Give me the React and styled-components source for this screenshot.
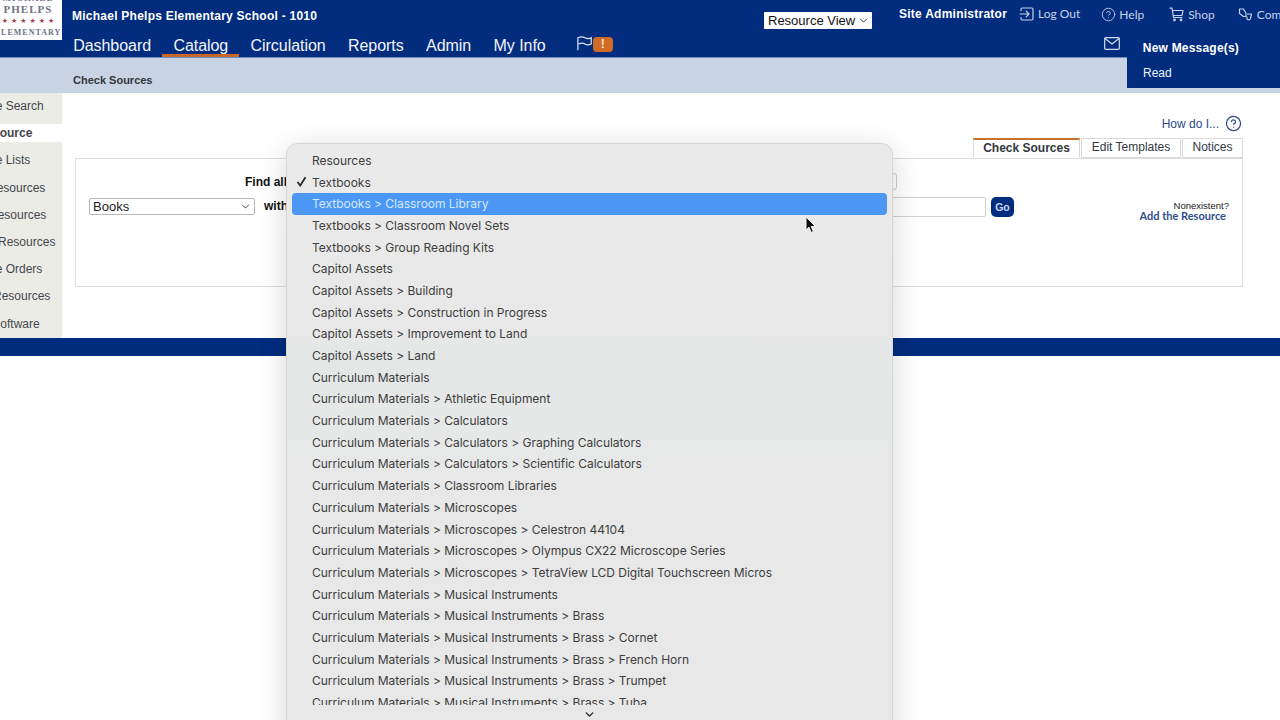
import React from "react";
import styled, { createGlobalStyle } from "styled-components";
import { ChevronDown, CircleHelp } from "lucide-react";

const Global = createGlobalStyle`
  html, body { margin: 0; width: 1280px; height: 720px; overflow: hidden; background: #fff; }
  body { font-family: "Liberation Sans", Arial, sans-serif; color: #222; }
  #root { width: 1280px; height: 720px; }
`;

const navy = "#022c7e";

const Page = styled.div`
  position: relative;
  width: 1280px;
  height: 720px;
  overflow: hidden;
`;
const Header = styled.header`
  display: flex;
  height: 57px;
  background: ${navy};
`;
const Logo = styled.div`
  width: 62px;
  height: 40px;
  background: #fff;
  overflow: hidden;
  display: flex;
  flex-direction: column;
  align-items: center;
  flex: none;
  font-family: "Liberation Serif", serif;
  font-weight: 700;
  color: #6d7482;
`;
const LogoInner = styled.div`
  width: 70px;
  margin: -7px 0 0 -6px;
  display: flex;
  flex-direction: column;
  align-items: center;
`;
const LogoLine = styled.div`
  font-size: ${(p) => p.$size}px;
  letter-spacing: ${(p) => p.$track}px;
  line-height: ${(p) => p.$lh}px;
  white-space: nowrap;
`;
const Stars = styled.div`
  color: #a43d4c;
  font-size: 7px;
  line-height: 10px;
  letter-spacing: 3px;
  margin-left: 3px;
  font-family: "DejaVu Sans", sans-serif;
`;
const HeaderMain = styled.div`
  flex: 1;
  display: flex;
  flex-direction: column;
  min-width: 0;
`;
const TopRow = styled.div`
  display: flex;
  align-items: flex-start;
  height: 32px;
  padding-left: 10px;
  white-space: nowrap;
`;
const School = styled.div`
  font-size: 12px;
  font-weight: 700;
  color: #fff;
  margin-top: 9px;
  line-height: 14px;
  width: 447px;
  letter-spacing: 0.25px;
  flex: none;
`;
const ViewSelect = styled.div`
  width: 108px;
  height: 17px;
  flex: none;
  margin: 12px 0 0 245px;
  background: #fff;
  color: #111;
  border-radius: 1px;
  display: flex;
  align-items: center;
  justify-content: space-between;
  box-sizing: border-box;
  padding: 0 2px 0 4px;
  font-size: 13px;
`;
const Admin = styled.div`
  margin: 7px 0 0 27px;
  font-size: 12px;
  line-height: 14px;
  font-weight: 700;
  letter-spacing: 0.25px;
  color: #fff;
  flex: none;
  width: 108px;
`;
const TopLink = styled.a`
  display: flex;
  align-items: center;
  gap: ${(p) => p.$space ?? 4}px;
  margin: 7px 0 0 ${(p) => p.$gap}px;
  font-family: Lato, sans-serif;
  font-size: 12px;
  line-height: 14px;
  color: #c6d2e8;
  flex: none;
`;
const NavRow = styled.div`
  position: relative;
  display: flex;
  height: 25px;
  align-items: stretch;
`;
const NavItem = styled.a`
  display: flex;
  align-items: center;
  padding: 5px 11.2px 0;
  box-sizing: border-box;
  font-size: 16px;
  letter-spacing: -0.05px;
  color: #f2f5fb;
  border-bottom: 3px solid ${(p) => (p.$active ? "#c8672a" : "transparent")};
`;
const FlagWrap = styled.div`
  position: relative;
  width: 40px;
  margin-left: 20px;
  padding-top: 3px;
`;
const FlagBadge = styled.span`
  position: absolute;
  left: 16px;
  top: 5px;
  width: 20px;
  height: 15px;
  border-radius: 4px;
  background: #d06a24;
  color: #f5e3d4;
  font-size: 12px;
  font-weight: 700;
  line-height: 15px;
  text-align: center;
`;
const MailSlot = styled.div`
  margin-left: 487px;
  padding-top: 4px;
`;
const NewMessages = styled.div`
  margin-left: 23px;
  padding-top: 9px;
  font-size: 12px;
  font-weight: 700;
  letter-spacing: 0.2px;
  color: #fff;
`;
const SubNav = styled.div`
  display: flex;
  height: 36px;
  background: #c8d3e3;
  border-top: 1px solid #6f8cc0;
  box-sizing: border-box;
  justify-content: space-between;
  align-items: flex-start;
`;
const Crumb = styled.div`
  margin: 16px 0 0 73px;
  font-size: 11px;
  line-height: 13px;
  font-weight: 700;
  color: #33373f;
`;
const ReadBox = styled.div`
  width: 153px;
  height: 31px;
  margin-top: -1px;
  box-sizing: border-box;
  padding: 9px 0 0 16px;
  background: ${navy};
  color: #f0f3fa;
  font-size: 12px;
  line-height: 14px;
`;
const Body = styled.div`
  display: flex;
  height: 245px;
`;
const Sidebar = styled.nav`
  width: 62px;
  flex: none;
  background: #ecece6;
  overflow: hidden;
  padding-top: 4px;
  box-sizing: border-box;
  display: flex;
  flex-direction: column;
  gap: 9.2px;
`;
const SideItem = styled.a`
  display: block;
  height: 18px;
  flex: none;
  line-height: 18px;
  font-size: 12px;
  white-space: nowrap;
  color: #44474d;
  background: ${(p) => (p.$active ? "#fff" : "transparent")};
  font-weight: ${(p) => (p.$active ? 700 : 400)};
  text-indent: ${(p) => -p.$cut}px;
  overflow: hidden;
`;
const Content = styled.main`
  flex: 1;
  display: flex;
  flex-direction: column;
  padding: 22px 37px 0 13px;
  min-width: 0;
`;
const HelpRow = styled.div`
  height: 17px;
  display: flex;
  justify-content: flex-end;
  align-items: center;
  gap: 6px;
  font-size: 12px;
  color: #2a4a8c;
  padding-right: 1px;
`;
const Tabs = styled.div`
  display: flex;
  justify-content: flex-end;
  gap: 1px;
  margin-top: 6px;
  height: 20px;
`;
const Tab = styled.a`
  display: flex;
  align-items: center;
  justify-content: center;
  box-sizing: border-box;
  width: ${(p) => p.$w}px;
  padding-bottom: 2px;
  font-size: 12px;
  font-weight: ${(p) => (p.$active ? 700 : 400)};
  color: #33373f;
  border: 1px solid #d8d8d8;
  border-bottom: ${(p) => (p.$active ? "1px solid #fff" : "1px solid #d8d8d8")};
  border-top: ${(p) => (p.$active ? "2px solid #c8702c" : "1px solid #d8d8d8")};
  position: relative;
  z-index: 1;
`;
const Panel = styled.section`
  height: 129px;
  box-sizing: border-box;
  border: 1px solid #dedede;
  padding: 14px 13px 0 13px;
  display: flex;
  flex-direction: column;
  gap: 7px;
`;
const FindRow = styled.div`
  display: flex;
  height: 17px;
  align-items: center;
  padding-left: 156px;
  font-size: 12px;
  font-weight: 700;
  color: #111;
`;
const SmallSelect = styled.div`
  margin: 0 332px 0 auto;
  width: 40px;
  height: 17px;
  border: 1px solid #ccc;
  border-radius: 3px;
  box-sizing: border-box;
  flex: none;
`;
const QueryRow = styled.div`
  display: flex;
  height: 20px;
  align-items: flex-start;
`;
const TypeSelect = styled.div`
  width: 166px;
  height: 17px;
  margin-top: 1px;
  box-sizing: border-box;
  border: 1px solid #b8b8b8;
  border-radius: 2px;
  flex: none;
  padding: 0 2px 0 3px;
  display: flex;
  align-items: center;
  justify-content: space-between;
  font-size: 13px;
  color: #222;
`;
const With = styled.span`
  margin-left: 9px;
  font-size: 12px;
  line-height: 19px;
  font-weight: 700;
  color: #111;
`;
const QueryInput = styled.div`
  width: 697px;
  height: 20px;
  margin-left: 1px;
  box-sizing: border-box;
  border: 1px solid #cfcfcf;
  border-radius: 2px;
  flex: none;
`;
const Go = styled.button`
  width: 23px;
  height: 20px;
  margin-left: 5px;
  padding: 0;
  border: 0;
  border-radius: 5px;
  background: ${navy};
  color: #c8d4ea;
  font: 700 10.5px "Liberation Sans", sans-serif;
  flex: none;
`;
const Missing = styled.div`
  margin-left: auto;
  padding-top: 3px;
  display: flex;
  flex-direction: column;
  align-items: flex-end;
`;
const MissingLabel = styled.span`
  font-size: 9.5px;
  line-height: 11px;
  color: #222;
`;
const MissingLink = styled.a`
  font-family: Lato, sans-serif;
  font-size: 11px;
  line-height: 10px;
  font-weight: 700;
  color: #2f4f8f;
  margin-right: 3px;
`;
const Footer = styled.div`
  height: 18px;
  background: ${navy};
`;
const Menu = styled.div`
  position: absolute;
  left: 286px;
  top: 143px;
  width: 607px;
  height: 600px;
  box-sizing: border-box;
  padding: 5.5px 5px 0;
  border-radius: 11px;
  border: 1px solid #d6d6d6;
  background: linear-gradient(#eaeaea 0, #e8e8e8 190px, #e3e7e6 215px, #e6e8e8 260px, #e8e8e8 340px);
  box-shadow: 0 6px 28px rgba(0, 0, 0, 0.16);
`;
const MenuList = styled.div`
  height: 555px;
  overflow: hidden;
`;
const MenuItem = styled.div`
  height: 21.7px;
  display: flex;
  align-items: center;
  padding-left: 20px;
  border-radius: 4px;
  position: relative;
  font-family: Inter, "Liberation Sans", sans-serif;
  font-size: 12px;
  letter-spacing: -0.02px;
  white-space: nowrap;
  color: ${(p) => (p.$hot ? "#d8e7fb" : "#3d3d3d")};
  background: ${(p) => (p.$hot ? "#4a97f6" : "transparent")};
`;
const Check = styled.svg`
  position: absolute;
  left: 4px;
  top: 5px;
`;
const MenuMore = styled.div`
  display: flex;
  justify-content: center;
  margin-top: 3px;
  color: #222;
`;
const Cursor = styled.svg`
  position: absolute;
  left: 805px;
  top: 216px;
`;

const items = [
  "Resources", "Textbooks", "Textbooks > Classroom Library", "Textbooks > Classroom Novel Sets",
  "Textbooks > Group Reading Kits", "Capitol Assets", "Capitol Assets > Building",
  "Capitol Assets > Construction in Progress", "Capitol Assets > Improvement to Land",
  "Capitol Assets > Land", "Curriculum Materials", "Curriculum Materials > Athletic Equipment",
  "Curriculum Materials > Calculators", "Curriculum Materials > Calculators > Graphing Calculators",
  "Curriculum Materials > Calculators > Scientific Calculators",
  "Curriculum Materials > Classroom Libraries", "Curriculum Materials > Microscopes",
  "Curriculum Materials > Microscopes > Celestron 44104",
  "Curriculum Materials > Microscopes > Olympus CX22 Microscope Series",
  "Curriculum Materials > Microscopes > TetraView LCD Digital Touchscreen Micros",
  "Curriculum Materials > Musical Instruments", "Curriculum Materials > Musical Instruments > Brass",
  "Curriculum Materials > Musical Instruments > Brass > Cornet",
  "Curriculum Materials > Musical Instruments > Brass > French Horn",
  "Curriculum Materials > Musical Instruments > Brass > Trumpet",
  "Curriculum Materials > Musical Instruments > Brass > Tuba",
];

const side = [
  ["Resource Search", 49], ["Find Resource", 51, true], ["Resource Lists", 49], ["Active Resources", 48],
  ["Active Resources", 47], ["Shared Resources", 44], ["Resource Orders", 49], ["Active Resources", 43],
  ["Check Software", 45],
];

const nav = ["Dashboard", "Catalog", "Circulation", "Reports", "Admin", "My Info"];

const Line = { fill: "none", stroke: "currentColor", strokeWidth: 1.2, strokeLinecap: "round", strokeLinejoin: "round" };

export default function App() {
  return (
    <Page>
      <Global />
      <Header>
        <Logo>
          <LogoInner>
            <LogoLine $size={9} $track={1} $lh={10}>MICHAEL</LogoLine>
            <LogoLine $size={11} $track={1} $lh={13}>PHELPS</LogoLine>
            <Stars>★★★★★★</Stars>
            <LogoLine $size={8} $track={1} $lh={14}>ELEMENTARY</LogoLine>
          </LogoInner>
        </Logo>
        <HeaderMain>
          <TopRow>
            <School>Michael Phelps Elementary School - 1010</School>
            <ViewSelect>Resource View<ChevronDown size={13} strokeWidth={1.5} /></ViewSelect>
            <Admin>Site Administrator</Admin>
            <TopLink $gap={12}>
              <svg width="15" height="14" viewBox="0 0 15 14" {...Line}>
                <path d="M2 3.5V2.2Q2 1 3.2 1H12.8Q14 1 14 2.2V11.8Q14 13 12.8 13H3.2Q2 13 2 11.8V10.5" />
                <path d="M1 7H10M7.2 4.2 10 7 7.2 9.8" />
              </svg>
              Log Out
            </TopLink>
            <TopLink $gap={21} $space={3}>
              <CircleHelp size={15} strokeWidth={1.4} />
              Help
            </TopLink>
            <TopLink $gap={25}>
              <svg width="15" height="15" viewBox="0 0 15 15" {...Line}>
                <path d="M1 1.2H3L4.5 10.5H13M3.4 3.5H14L13 8.5H4.2" />
                <circle cx="5.5" cy="13" r="0.8" />
                <circle cx="12" cy="13" r="0.8" />
              </svg>
              Shop
            </TopLink>
            <TopLink $gap={23}>
              <svg width="15" height="15" viewBox="0 0 15 15" {...Line}>
                <path d="M1.5 2H5.5L8 6.5V9.5H5.5L1.5 6.5Z" />
                <path d="M9.5 7H13.5L12.5 11.5Q11.5 13.5 9.5 12.5Q8.5 11.5 9 10" />
              </svg>
              Community
            </TopLink>
          </TopRow>
          <NavRow>
            {nav.map((n) => (
              <NavItem key={n} $active={n === "Catalog"}>{n}</NavItem>
            ))}
            <FlagWrap>
              <svg width="16" height="17" viewBox="0 0 18 17" fill="none" stroke="#dbe4f4" strokeWidth="1.4">
                <path d="M1 16V2Q5 0 9 2T16 2V9Q12 11 9 9T2 9" />
              </svg>
              <FlagBadge>!</FlagBadge>
            </FlagWrap>
            <MailSlot>
              <svg width="16" height="13" viewBox="0 0 16 13" fill="none" stroke="#d4ddee" strokeWidth="1.2">
                <rect x="0.7" y="0.7" width="14.6" height="11.6" rx="1" />
                <path d="M1 1.5 8 7l7-5.5" />
              </svg>
            </MailSlot>
            <NewMessages>New Message(s)</NewMessages>
          </NavRow>
        </HeaderMain>
      </Header>
      <SubNav>
        <Crumb>Check Sources</Crumb>
        <ReadBox>Read</ReadBox>
      </SubNav>
      <Body>
        <Sidebar>
          {side.map(([t, cut, active], i) => (
            <SideItem key={i} $cut={cut} $active={active}>{t}</SideItem>
          ))}
        </Sidebar>
        <Content>
          <HelpRow>
            How do I...
            <CircleHelp size={17} strokeWidth={1.8} />
          </HelpRow>
          <Tabs>
            <Tab $w={107} $active>Check Sources</Tab>
            <Tab $w={100}>Edit Templates</Tab>
            <Tab $w={61}>Notices</Tab>
          </Tabs>
          <Panel>
            <FindRow>
              Find all resources
              <SmallSelect />
            </FindRow>
            <QueryRow>
              <TypeSelect>Books<ChevronDown size={13} strokeWidth={1.5} /></TypeSelect>
              <With>with</With>
              <QueryInput />
              <Go>Go</Go>
              <Missing>
                <MissingLabel>Nonexistent?</MissingLabel>
                <MissingLink>Add the Resource</MissingLink>
              </Missing>
            </QueryRow>
          </Panel>
        </Content>
      </Body>
      <Footer />
      <Menu>
        <MenuList>
          {items.map((t, i) => (
            <MenuItem key={t} $hot={i === 2}>
              {i === 1 && (
                <Check width="11" height="11" viewBox="0 0 11 11" fill="none" stroke="#222" strokeWidth="1.7">
                  <path d="M1.5 6 4.2 9.5 9.5 1.2" />
                </Check>
              )}
              {t}
            </MenuItem>
          ))}
        </MenuList>
        <MenuMore>
          <ChevronDown size={13} strokeWidth={2.6} />
        </MenuMore>
      </Menu>
      <Cursor width="12" height="18" viewBox="0 0 12 18">
        <path d="M1 1V14L4 11.2 6.2 16.4 8.4 15.4 6.2 10.4H10.4Z" fill="#111" stroke="#fff" strokeWidth="0.9" />
      </Cursor>
    </Page>
  );
}
